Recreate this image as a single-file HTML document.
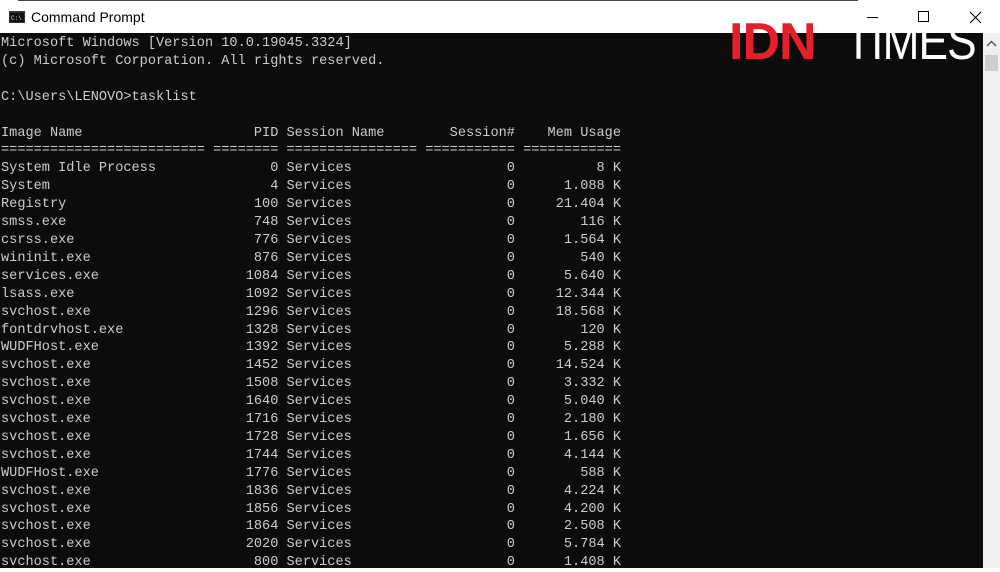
<!DOCTYPE html>
<html><head><meta charset="utf-8"><style>
html,body{margin:0;padding:0;width:1000px;height:568px;overflow:hidden;background:#fff;font-family:"Liberation Sans",sans-serif}
#tb{position:absolute;left:0;top:0;width:1000px;height:33px;background:#fff}
#tb .line{position:absolute;left:18px;top:0;width:840px;height:1px;background:#444}
#tb .title{position:absolute;left:31px;top:9px;font-size:14px;color:#000}
#con{position:absolute;left:0;top:33px;width:983px;height:535px;background:#0c0c0c}
pre{margin:0;position:absolute;left:1px;top:2px;font-family:"Liberation Mono",monospace;font-size:13.6px;line-height:17.9px;color:#cccccc}
#sb{position:absolute;left:983px;top:33px;width:17px;height:535px;background:#f0f0f0;z-index:2}
#thumb{position:absolute;left:985px;top:55px;width:13px;height:16px;background:#cdcdcd;z-index:3}
.logo{position:absolute;top:16px;font-family:"Liberation Sans",sans-serif;font-weight:bold;font-size:52px;letter-spacing:-1px;line-height:1}
</style></head><body>
<div id="tb"><div class="line"></div>
<svg style="position:absolute;left:9px;top:11px" width="16" height="12"><rect width="16" height="12" fill="#333"/><rect x="1" y="2" width="14" height="9" fill="#111"/><text x="2" y="9" font-size="6" fill="#ddd" font-family="Liberation Mono">C:\</text></svg>
<div class="title">Command Prompt</div>
<svg style="position:absolute;left:860px;top:10px" width="130" height="16"><line x1="7" y1="7.5" x2="18" y2="7.5" stroke="#000"/><rect x="58.5" y="1.5" width="10" height="10" fill="none" stroke="#000"/><path d="M110 2 L121 13 M121 2 L110 13" stroke="#000"/></svg>
</div>
<div id="con"><pre>Microsoft Windows [Version 10.0.19045.3324]
(c) Microsoft Corporation. All rights reserved.

C:\Users\LENOVO&gt;tasklist

Image Name                     PID Session Name        Session#    Mem Usage
========================= ======== ================ =========== ============
System Idle Process              0 Services                   0          8 K
System                           4 Services                   0      1.088 K
Registry                       100 Services                   0     21.404 K
smss.exe                       748 Services                   0        116 K
csrss.exe                      776 Services                   0      1.564 K
wininit.exe                    876 Services                   0        540 K
services.exe                  1084 Services                   0      5.640 K
lsass.exe                     1092 Services                   0     12.344 K
svchost.exe                   1296 Services                   0     18.568 K
fontdrvhost.exe               1328 Services                   0        120 K
WUDFHost.exe                  1392 Services                   0      5.288 K
svchost.exe                   1452 Services                   0     14.524 K
svchost.exe                   1508 Services                   0      3.332 K
svchost.exe                   1640 Services                   0      5.040 K
svchost.exe                   1716 Services                   0      2.180 K
svchost.exe                   1728 Services                   0      1.656 K
svchost.exe                   1744 Services                   0      4.144 K
WUDFHost.exe                  1776 Services                   0        588 K
svchost.exe                   1836 Services                   0      4.224 K
svchost.exe                   1856 Services                   0      4.200 K
svchost.exe                   1864 Services                   0      2.508 K
svchost.exe                   2020 Services                   0      5.784 K
svchost.exe                    800 Services                   0      1.408 K</pre></div>
<div id="sb"></div><div id="thumb"></div>
<svg style="position:absolute;left:986px;top:40px;z-index:3" width="11" height="8"><path d="M1 6 L5.5 1.5 L10 6" fill="none" stroke="#555" stroke-width="1.5"/></svg>
<div class="logo" style="left:729px;color:#e5202a">IDN</div>
<div class="logo" style="left:845px;color:#fff;font-weight:normal;letter-spacing:-1px;transform:scaleX(0.85);transform-origin:left top">TIMES</div>
</body></html>
